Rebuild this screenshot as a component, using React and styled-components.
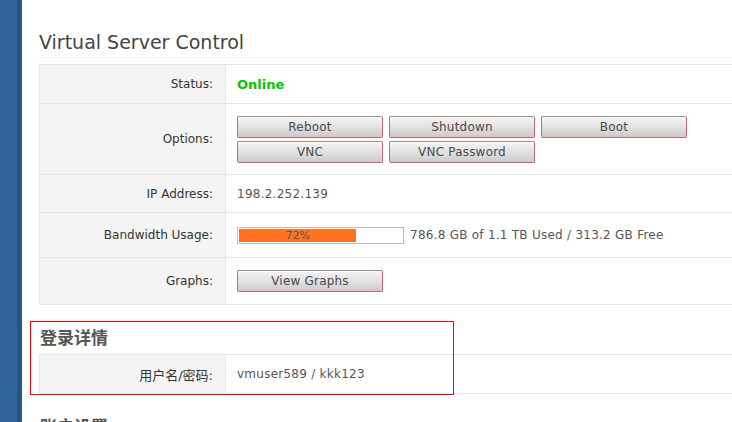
import styled, { createGlobalStyle } from 'styled-components';

const GlobalStyle = createGlobalStyle`
  html, body {
    margin: 0;
    padding: 0;
    background: #fff;
    overflow: hidden;
  }
  body {
    font-family: "DejaVu Sans", "Noto Sans CJK SC", sans-serif;
    font-size: 12px;
    color: #333;
  }
`

const Page = styled.div`
  display: flex;
  height: 422px;
`

const Sidebar = styled.div`
  flex: 0 0 22px;
  background: linear-gradient(to right, #2f6496 0, #2f6496 17px, #255587 17px);
`

const Content = styled.div`
  flex: 1;
  min-width: 0;
  padding-left: 17px;
  overflow: hidden;
`

const Title = styled.h1`
  margin: 0 0 6px;
  padding: 31px 0 4px;
  font-size: 19px;
  line-height: 22px;
  font-weight: normal;
  color: #444;
  border-bottom: 1px solid #f1f1f1;
  width: 720px;
`

const Table = styled.div`
  width: 720px;
  border-top: 1px solid #e7e7e7;
  border-left: 1px solid #e7e7e7;
`

const Row = styled.div`
  display: grid;
  grid-template-columns: 186px 1fr;
  min-height: ${props => props.h}px;
  border-bottom: 1px solid #e7e7e7;
`

const Label = styled.div`
  display: flex;
  align-items: center;
  justify-content: flex-end;
  padding-right: 12px;
  background: #f4f4f4;
  border-right: 1px solid #e7e7e7;
  color: #333;
  font-size: ${props => props.cjk ? '13px' : '12px'};
`

const Value = styled.div`
  display: flex;
  align-items: center;
  gap: 6px;
  padding-left: 11px;
  color: #555;
  letter-spacing: 0.25px;
`

const Online = styled.span`
  color: #00c800;
  font-weight: bold;
  font-size: 13px;
  letter-spacing: 0;
`

const ButtonGrid = styled.div`
  display: grid;
  grid-template-columns: repeat(3, 146px);
  gap: 3px 6px;
  padding-top: 1px;
`

const Button = styled.button`
  width: 146px;
  height: 22px;
  padding: 0;
  font-family: "DejaVu Sans", sans-serif;
  font-size: 12px;
  letter-spacing: 0.2px;
  color: #4a4a4a;
  border: 1px solid #c9666c;
  border-top-color: #9a8a8a;
  border-radius: 2px;
  background: linear-gradient(#f4f4f4, #e2e2e2 50%, #cbcbcb);
  box-shadow: inset 0 1px 0 #fff;
  cursor: pointer;
`

const Bar = styled.div`
  width: 163px;
  height: 13px;
  padding: 1px;
  border: 1px solid #bdbdbd;
  background: #fff;
`

const Fill = styled.div`
  height: 13px;
  background: #ff7322;
  color: #555;
  font-size: 11px;
  line-height: 13px;
  text-align: center;
  letter-spacing: 0;
`

const Section = styled.div`
  position: relative;
  margin-top: 23px;
`

const SectionTitle = styled.h2`
  margin: 0 0 6px;
  font-size: 17px;
  line-height: 20px;
  font-weight: bold;
  color: #555;
  padding-left: 1px;
`

const Highlight = styled.div`
  position: absolute;
  left: -9px;
  top: -7px;
  width: 424px;
  height: 74px;
  box-sizing: border-box;
  border: 1px solid #f00;
  pointer-events: none;
`

function App() {
  const used = 72;
  return (
    <Page>
      <GlobalStyle />
      <Sidebar />
      <Content>
        <Title>Virtual Server Control</Title>
        <Table>
          <Row h={38}>
            <Label>Status:</Label>
            <Value><Online>Online</Online></Value>
          </Row>
          <Row h={70}>
            <Label>Options:</Label>
            <Value>
              <ButtonGrid>
                <Button>Reboot</Button>
                <Button>Shutdown</Button>
                <Button>Boot</Button>
                <Button>VNC</Button>
                <Button>VNC Password</Button>
              </ButtonGrid>
            </Value>
          </Row>
          <Row h={37}>
            <Label>IP Address:</Label>
            <Value>198.2.252.139</Value>
          </Row>
          <Row h={44}>
            <Label>Bandwidth Usage:</Label>
            <Value>
              <Bar>
                <Fill style={{ width: `${used}%` }}>{used}%</Fill>
              </Bar>
              786.8 GB of 1.1 TB Used / 313.2 GB Free
            </Value>
          </Row>
          <Row h={46}>
            <Label>Graphs:</Label>
            <Value><Button>View Graphs</Button></Value>
          </Row>
        </Table>

        <Section>
          <Highlight />
          <SectionTitle>登录详情</SectionTitle>
          <Table>
            <Row h={38}>
              <Label cjk>用户名/密码:</Label>
              <Value>vmuser589 / kkk123</Value>
            </Row>
          </Table>
        </Section>

        <Section>
          <SectionTitle>账户设置</SectionTitle>
        </Section>
      </Content>
    </Page>
  );
}

export default App;
